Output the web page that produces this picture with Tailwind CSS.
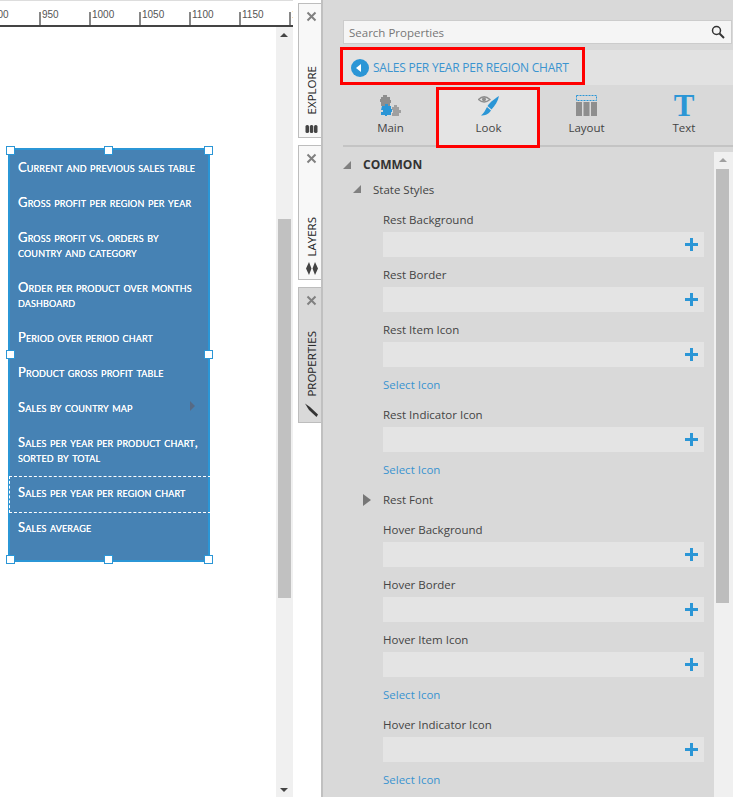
<!DOCTYPE html>
<html lang="en">
<head>
  <meta charset="UTF-8" />
  <title>Properties</title>
  <script src="https://cdn.jsdelivr.net/npm/@tailwindcss/browser@4"></script>
</head>
<body class="bg-white font-['Open_Sans',sans-serif]">
  <div class="flex w-[733px] h-[797px] overflow-hidden">

    <!-- canvas with ruler -->
    <div class="w-[298px] shrink-0 flex flex-col pr-[5px]">
      <div class="h-[27px] shrink-0 border-t border-t-[#dddddd] border-b-2 border-b-[#444444] flex items-end overflow-hidden font-['Liberation_Sans',sans-serif] text-[10px] leading-none text-[#555555]">
        <div class="w-[50px] h-[13px] shrink-0 ml-[-11px] border-l-2 border-[#888888] pl-[1px]"><span class="block mt-[-2px]">900</span></div>
        <div class="w-[50px] h-[13px] shrink-0 border-l-2 border-[#888888] pl-[1px]"><span class="block mt-[-2px]">950</span></div>
        <div class="w-[50px] h-[13px] shrink-0 border-l-2 border-[#888888] pl-[1px]"><span class="block mt-[-2px]">1000</span></div>
        <div class="w-[50px] h-[13px] shrink-0 border-l-2 border-[#888888] pl-[1px]"><span class="block mt-[-2px]">1050</span></div>
        <div class="w-[50px] h-[13px] shrink-0 border-l-2 border-[#888888] pl-[1px]"><span class="block mt-[-2px]">1100</span></div>
        <div class="w-[50px] h-[13px] shrink-0 border-l-2 border-[#888888] pl-[1px]"><span class="block mt-[-2px]">1150</span></div>
        <div class="w-[50px] h-[13px] shrink-0 border-l-2 border-[#888888] pl-[1px]"><span class="block mt-[-2px]">1200</span></div>
      </div>
      <div class="flex flex-1 min-h-0">
        <div class="flex-1 pl-[8px] pt-[121px]">
          <div class="relative w-[202px] h-[414px] bg-[#4682b4] border-2 border-[#2b96d6] font-['Lato',sans-serif] [font-variant:small-caps] tracking-[0.14px] [text-shadow:0_0_0.6px_white] text-[13px] leading-[15px] text-white">
            <div class="py-[10px] px-[8px] whitespace-nowrap">Current and previous sales table</div>
            <div class="py-[10px] px-[8px] whitespace-nowrap">Gross profit per region per year</div>
            <div class="py-[10px] px-[8px] whitespace-nowrap">Gross profit vs. orders by<br />country and category</div>
            <div class="py-[10px] px-[8px] whitespace-nowrap">Order per product over months<br />dashboard</div>
            <div class="py-[10px] px-[8px] whitespace-nowrap">Period over period chart</div>
            <div class="py-[10px] px-[8px] whitespace-nowrap">Product gross profit table</div>
            <div class="relative py-[10px] px-[8px] whitespace-nowrap">Sales by country map
              <span class="absolute left-[180px] top-[11px] w-0 h-0 border-y-[5px] border-y-transparent border-l-[5px] border-l-[#566a85]"></span>
            </div>
            <div class="py-[10px] px-[8px] whitespace-nowrap">Sales per year per product chart,<br />sorted by total</div>
            <div class="relative py-[10px] px-[8px] whitespace-nowrap">Sales per year per region chart
              <span class="absolute left-[-1px] right-[-3px] top-[1px] h-[37px] border border-dashed border-white"></span>
            </div>
            <div class="py-[10px] px-[8px] whitespace-nowrap">Sales average</div>

            <span class="absolute left-[-4px] top-[-4px] w-[9px] h-[9px] bg-white border border-[#2b96d6]"></span>
            <span class="absolute left-[94px] top-[-4px] w-[9px] h-[9px] bg-white border border-[#2b96d6]"></span>
            <span class="absolute right-[-5px] top-[-4px] w-[9px] h-[9px] bg-white border border-[#2b96d6]"></span>
            <span class="absolute left-[-4px] top-[200px] w-[9px] h-[9px] bg-white border border-[#2b96d6]"></span>
            <span class="absolute right-[-5px] top-[200px] w-[9px] h-[9px] bg-white border border-[#2b96d6]"></span>
            <span class="absolute left-[-4px] bottom-[-4px] w-[9px] h-[9px] bg-white border border-[#2b96d6]"></span>
            <span class="absolute left-[94px] bottom-[-4px] w-[9px] h-[9px] bg-white border border-[#2b96d6]"></span>
            <span class="absolute right-[-5px] bottom-[-4px] w-[9px] h-[9px] bg-white border border-[#2b96d6]"></span>
          </div>
        </div>
        <!-- canvas scrollbar -->
        <div class="w-[17px] shrink-0 bg-[#f0f0f0] relative px-[2px] pt-[192px]">
          <div class="h-[379px] bg-[#c1c1c1]"></div>
          <span class="absolute left-[4px] top-[6px] w-0 h-0 border-x-[4px] border-x-transparent border-b-[4px] border-b-[#444444]"></span>
          <span class="absolute left-[4px] bottom-[5px] w-0 h-0 border-x-[4px] border-x-transparent border-t-[4px] border-t-[#444444]"></span>
        </div>
      </div>
    </div>

    <!-- side tabs -->
    <div class="w-[23px] shrink-0 flex flex-col gap-[7px] pt-[3px] text-[11.5px] text-[#222222]">
      <div class="h-[135px] bg-[#f8f8f8] border border-r-0 border-[#bdbdbd] flex flex-col items-center pl-[3px] pt-[7px] pb-[4px]">
        <svg width="11" height="11" viewBox="0 0 11 11"><path d="M1.500 1.500l8 8M9.500 1.500l-8 8" stroke="#808080" stroke-width="2" /></svg>
        <span class="mt-auto [writing-mode:vertical-rl] rotate-180 leading-[14px]">EXPLORE</span>
        <svg class="mt-[11px]" width="13" height="8" viewBox="0 0 13 8"><rect x="0.500" width="3.500" height="8" rx="1.500" fill="#444444" /><rect x="4.800" width="3.500" height="8" rx="1.500" fill="#444444" /><rect x="9" width="3.500" height="8" rx="1.500" fill="#444444" /></svg>
      </div>
      <div class="h-[135px] bg-[#f8f8f8] border border-r-0 border-[#bdbdbd] flex flex-col items-center pl-[3px] pt-[7px] pb-[4px]">
        <svg width="11" height="11" viewBox="0 0 11 11"><path d="M1.500 1.500l8 8M9.500 1.500l-8 8" stroke="#808080" stroke-width="2" /></svg>
        <span class="mt-auto [writing-mode:vertical-rl] rotate-180 leading-[14px]">LAYERS</span>
        <svg class="mt-[6px]" width="12" height="13" viewBox="0 0 12 13"><path d="M3 0L5.500 6.500L3 13L0 6.500zM9 0L12 6.500L9 13L6.500 6.500z" fill="#444444" /></svg>
      </div>
      <div class="h-[136px] bg-[#d9d9d9] border border-r-0 border-[#bdbdbd] flex flex-col items-center pl-[3px] pt-[7px] pb-[5px]">
        <svg width="11" height="11" viewBox="0 0 11 11"><path d="M1.500 1.500l8 8M9.500 1.500l-8 8" stroke="#808080" stroke-width="2" /></svg>
        <span class="mt-auto [writing-mode:vertical-rl] rotate-180 leading-[14px]">PROPERTIES</span>
        <svg class="mt-[6px]" width="13" height="14" viewBox="0 0 13 14"><path d="M0 0.500L5 4L13 11.500L11.500 14L4 7z" fill="#333333" /></svg>
      </div>
    </div>

    <!-- properties panel -->
    <div class="relative flex-1 min-w-0 bg-[#d9d9d9] border-l-2 border-[#c0c0c0] pl-[20px] pt-[20px] flex flex-col text-[11.5px] text-[#444444]">
      <div class="h-[24px] shrink-0 mr-[1px] bg-[#f5f5f5] border border-[#cccccc] flex items-center justify-between pl-[5px] pr-[6px] text-[#777777]">
        <span class="pt-[2px]">Search Properties</span>
        <svg width="14" height="14" viewBox="0 0 14 14" fill="none" stroke="#333333"><circle cx="5.500" cy="5.500" r="4" stroke-width="1.500" /><path d="M8.500 8.500L13 13" stroke-width="2" /></svg>
      </div>
      <div class="h-[35px] shrink-0 mt-[6px] bg-[#e2e2e2] flex items-center pl-[8px] gap-[4px] text-[#3a94d0]">
        <span class="relative w-[18px] h-[18px] rounded-full bg-[#2b96d6] shrink-0">
          <span class="absolute left-[5px] top-[5px] w-0 h-0 border-y-[4px] border-y-transparent border-r-[5px] border-r-white"></span>
        </span>
        <span class="text-[12px] tracking-[-0.23px]">SALES PER YEAR PER REGION CHART</span>
      </div>

      <!-- category tabs -->
      <div class="h-[59px] shrink-0 mt-[3px] border-b-2 border-[#c4c4c4] flex">
        <div class="w-[95px] flex flex-col items-center pt-[7px]">
          <svg width="21" height="21" viewBox="0 0 21 21">
            <path d="M3 0h4v2h3v3h1v3h-1v3H1V7H0V4h1V2h2z" fill="#8e8e8e" />
            <path d="M12 12h2v-2h3v2h2v3h2v3h-2v3h-7v-3h1v-3h-1z" fill="#a0a0a0" />
            <path d="M2 11h3V9h3v2h3v3h1v3h-1v3H7v1H5v-1H1v-3h2v-2H1z" fill="#2b96d6" />
          </svg>
          <span class="mt-[3px]">Main</span>
        </div>
        <div class="w-[101px] bg-[#e4e4e4] flex flex-col items-center pt-[7px]">
          <svg width="21" height="21" viewBox="0 0 21 21">
            <path d="M0.500 4.500Q6 -1 12 4.500Q6 9.500 0.500 4.500z" fill="none" stroke="#8e8e8e" stroke-width="1.300" />
            <circle cx="6" cy="4.200" r="2" fill="#8e8e8e" />
            <path d="M21 1C18 3 12 7 9.500 11L13.500 14.500C17 10.500 20 6 21 1z" fill="#2b96d6" />
            <path d="M9 12L13 15.500C10.500 19.500 7 20.500 3 20.500C5.500 18.500 7.500 15 9 12z" fill="#2b96d6" />
          </svg>
          <span class="mt-[3px]">Look</span>
        </div>
        <div class="w-[95px] flex flex-col items-center pt-[7px]">
          <svg width="21" height="21" viewBox="0 0 21 21">
            <rect x="0.500" y="0.500" width="20" height="5" fill="none" stroke="#2b96d6" stroke-dasharray="2 1" />
            <path d="M0 7h6v14H0zM7.500 7h6v14h-6zM15 7h6v14h-6z" fill="#8e8e8e" />
          </svg>
          <span class="mt-[3px]">Layout</span>
        </div>
        <div class="w-[98px] ml-[1px] flex flex-col items-center pt-[7px]">
          <span class="h-[21px] font-['Liberation_Serif',serif] font-bold text-[31px] leading-[21px] text-[#2b96d6]">T</span>
          <span class="mt-[3px]">Text</span>
        </div>
      </div>

      <!-- property list -->
      <div class="flex-1 min-h-0 mt-[5px] flex leading-[25px]">
        <div class="w-[371px] shrink-0 overflow-hidden">
          <div class="relative h-[25px] pl-[20px] text-[12px] font-bold text-[#333333]">COMMON
            <span class="absolute left-0 top-[9px] w-0 h-0 border-l-[8px] border-l-transparent border-b-[8px] border-b-[#808080]"></span>
          </div>
          <div class="relative h-[25px] pl-[30px] mb-[5px]">State Styles
            <span class="absolute left-[10px] top-[8px] w-0 h-0 border-l-[8px] border-l-transparent border-b-[8px] border-b-[#808080]"></span>
          </div>
          <div class="pl-[40px] pr-[10px]">
            <div class="h-[25px]">Rest Background</div>
            <div class="h-[25px] mb-[5px] bg-[#e4e4e4] flex items-center justify-end pr-[6px]"><svg width="13" height="13" viewBox="0 0 13 13"><path d="M6.500 0v13M0 6.500h13" stroke="#2b96d6" stroke-width="3" /></svg></div>
            <div class="h-[25px]">Rest Border</div>
            <div class="h-[25px] mb-[5px] bg-[#e4e4e4] flex items-center justify-end pr-[6px]"><svg width="13" height="13" viewBox="0 0 13 13"><path d="M6.500 0v13M0 6.500h13" stroke="#2b96d6" stroke-width="3" /></svg></div>
            <div class="h-[25px]">Rest Item Icon</div>
            <div class="h-[25px] mb-[5px] bg-[#e4e4e4] flex items-center justify-end pr-[6px]"><svg width="13" height="13" viewBox="0 0 13 13"><path d="M6.500 0v13M0 6.500h13" stroke="#2b96d6" stroke-width="3" /></svg></div>
            <div class="h-[25px] mb-[5px] text-[#3a94d0]">Select Icon</div>
            <div class="h-[25px]">Rest Indicator Icon</div>
            <div class="h-[25px] mb-[5px] bg-[#e4e4e4] flex items-center justify-end pr-[6px]"><svg width="13" height="13" viewBox="0 0 13 13"><path d="M6.500 0v13M0 6.500h13" stroke="#2b96d6" stroke-width="3" /></svg></div>
            <div class="h-[25px] mb-[5px] text-[#3a94d0]">Select Icon</div>
            <div class="relative h-[25px] mb-[5px]">Rest Font
              <span class="absolute left-[-20px] top-[7px] w-0 h-0 border-y-[6px] border-y-transparent border-l-[8px] border-l-[#777777]"></span>
            </div>
            <div class="h-[25px]">Hover Background</div>
            <div class="h-[25px] mb-[5px] bg-[#e4e4e4] flex items-center justify-end pr-[6px]"><svg width="13" height="13" viewBox="0 0 13 13"><path d="M6.500 0v13M0 6.500h13" stroke="#2b96d6" stroke-width="3" /></svg></div>
            <div class="h-[25px]">Hover Border</div>
            <div class="h-[25px] mb-[5px] bg-[#e4e4e4] flex items-center justify-end pr-[6px]"><svg width="13" height="13" viewBox="0 0 13 13"><path d="M6.500 0v13M0 6.500h13" stroke="#2b96d6" stroke-width="3" /></svg></div>
            <div class="h-[25px]">Hover Item Icon</div>
            <div class="h-[25px] mb-[5px] bg-[#e4e4e4] flex items-center justify-end pr-[6px]"><svg width="13" height="13" viewBox="0 0 13 13"><path d="M6.500 0v13M0 6.500h13" stroke="#2b96d6" stroke-width="3" /></svg></div>
            <div class="h-[25px] mb-[5px] text-[#3a94d0]">Select Icon</div>
            <div class="h-[25px]">Hover Indicator Icon</div>
            <div class="h-[25px] mb-[5px] bg-[#e4e4e4] flex items-center justify-end pr-[6px]"><svg width="13" height="13" viewBox="0 0 13 13"><path d="M6.500 0v13M0 6.500h13" stroke="#2b96d6" stroke-width="3" /></svg></div>
            <div class="h-[25px] mb-[5px] text-[#3a94d0]">Select Icon</div>
          </div>
        </div>
        <!-- panel scrollbar -->
        <div class="relative flex-1 bg-[#f0f0f0] px-[2px] pt-[17px] pr-[4px]">
          <div class="h-[434px] bg-[#bdbdbd]"></div>
          <span class="absolute left-[5px] top-[6px] w-0 h-0 border-x-[4px] border-x-transparent border-b-[4px] border-b-[#a0a0a0]"></span>
        </div>
      </div>

      <!-- annotation boxes -->
      <span class="absolute left-[17px] top-[47px] w-[245px] h-[38px] border-[3px] border-[#ff0000]"></span>
      <span class="absolute left-[113px] top-[87px] w-[104px] h-[61px] border-[3px] border-[#ff0000]"></span>
    </div>
  </div>
</body>
</html>
